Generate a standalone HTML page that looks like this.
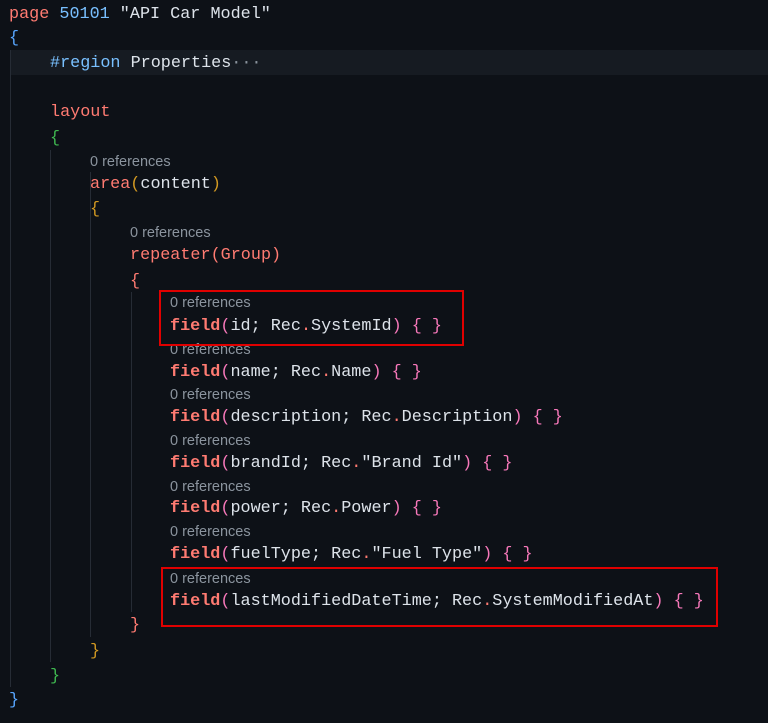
<!DOCTYPE html>
<html><head><meta charset="utf-8"><style>
html,body{margin:0;padding:0;background:#0d1117;width:768px;height:723px;overflow:hidden;position:relative}
.l{position:absolute;white-space:pre;font-family:"Liberation Mono",monospace;font-size:16.8px;line-height:24px;color:#dde3ea;margin-top:2px}
.c{position:absolute;white-space:pre;font-family:"Liberation Sans",sans-serif;font-size:14.5px;line-height:20px;color:#8b949e;margin-top:1px}
.k{color:#ff7b72;font-weight:bold}
.n{color:#79c0ff}
.d{color:#ff7b72}
.b0{color:#58a6ff}.b1{color:#3fb950}.b2{color:#d29922}.b3{color:#ff7b72}.b4{color:#f778ba}
.g{position:absolute;width:1px;background:#262c35}
.box{position:absolute;border:2px solid #e00000;box-sizing:border-box}
</style></head><body>
<div style="position:absolute;left:10px;top:50px;width:758px;height:25px;background:#161b22"></div>
<div class="g" style="left:10px;top:50px;height:637px"></div>
<div class="g" style="left:50px;top:150px;height:512px"></div>
<div class="g" style="left:90px;top:172px;height:465px"></div>
<div class="g" style="left:131px;top:292px;height:320px"></div>

<div class="l" style="left:9px;top:1px"><span class="k" style="font-weight:normal">page</span> <span class="n">50101</span> "API Car Model"</div>
<div class="l" style="left:9px;top:25px"><span class="b0">{</span></div>
<div class="l" style="left:50px;top:50px"><span class="n">#region</span> Properties<span style="color:#8b949e">···</span></div>
<div class="l" style="left:50px;top:99px"><span class="k" style="font-weight:normal">layout</span></div>
<div class="l" style="left:50px;top:125px"><span class="b1">{</span></div>
<div class="c" style="left:90px;top:151px">0 references</div>
<div class="l" style="left:90px;top:171px"><span class="k" style="font-weight:normal">area</span><span class="b2">(</span>content<span class="b2">)</span></div>
<div class="l" style="left:90px;top:196px"><span class="b2">{</span></div>
<div class="c" style="left:130px;top:222px">0 references</div>
<div class="l" style="left:130px;top:242px"><span class="k" style="font-weight:normal">repeater</span><span class="b3">(</span><span class="d">Group</span><span class="b3">)</span></div>
<div class="l" style="left:130px;top:268px"><span class="b3">{</span></div>

<div class="c" style="left:170px;top:292px">0 references</div>
<div class="l" style="left:170px;top:313px"><span class="k">field</span><span class="b4">(</span>id; Rec<span class="d">.</span>SystemId<span class="b4">)</span> <span class="b4">{ }</span></div>
<div class="c" style="left:170px;top:339px">0 references</div>
<div class="l" style="left:170px;top:359px"><span class="k">field</span><span class="b4">(</span>name; Rec<span class="d">.</span>Name<span class="b4">)</span> <span class="b4">{ }</span></div>
<div class="c" style="left:170px;top:384px">0 references</div>
<div class="l" style="left:170px;top:404px"><span class="k">field</span><span class="b4">(</span>description; Rec<span class="d">.</span>Description<span class="b4">)</span> <span class="b4">{ }</span></div>
<div class="c" style="left:170px;top:430px">0 references</div>
<div class="l" style="left:170px;top:450px"><span class="k">field</span><span class="b4">(</span>brandId; Rec<span class="d">.</span>"Brand Id"<span class="b4">)</span> <span class="b4">{ }</span></div>
<div class="c" style="left:170px;top:476px">0 references</div>
<div class="l" style="left:170px;top:495px"><span class="k">field</span><span class="b4">(</span>power; Rec<span class="d">.</span>Power<span class="b4">)</span> <span class="b4">{ }</span></div>
<div class="c" style="left:170px;top:521px">0 references</div>
<div class="l" style="left:170px;top:541px"><span class="k">field</span><span class="b4">(</span>fuelType; Rec<span class="d">.</span>"Fuel Type"<span class="b4">)</span> <span class="b4">{ }</span></div>
<div class="c" style="left:170px;top:568px">0 references</div>
<div class="l" style="left:170px;top:588px"><span class="k">field</span><span class="b4">(</span>lastModifiedDateTime; Rec<span class="d">.</span>SystemModifiedAt<span class="b4">)</span> <span class="b4">{ }</span></div>

<div class="l" style="left:130px;top:612px"><span class="b3">}</span></div>
<div class="l" style="left:90px;top:638px"><span class="b2">}</span></div>
<div class="l" style="left:50px;top:663px"><span class="b1">}</span></div>
<div class="l" style="left:9px;top:687px"><span class="b0">}</span></div>

<div class="box" style="left:159px;top:290px;width:305px;height:56px"></div>
<div class="box" style="left:161px;top:567px;width:557px;height:60px"></div>
</body></html>
